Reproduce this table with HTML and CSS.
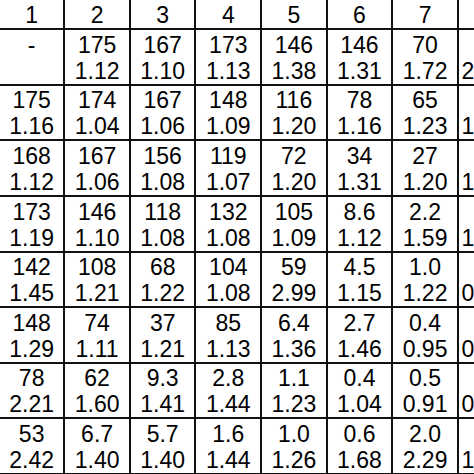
FILE: index.html
```html
<!DOCTYPE html>
<html lang="en">
<head>
<meta charset="utf-8">
<title>Table</title>
<link rel="stylesheet" href="styles.css">
</head>
<body>
<div class="viewport">
<table class="grid">
<colgroup>
<col class="c1"><col class="cn"><col class="cn"><col class="cn"><col class="cn"><col class="cn"><col class="cn"><col class="c8">
</colgroup>
<thead>
<tr class="head"><th>1</th><th>2</th><th>3</th><th>4</th><th>5</th><th>6</th><th>7</th><th>8</th></tr>
</thead>
<tbody>
<tr><td>-</td><td>175<br>1.12</td><td>167<br>1.10</td><td>173<br>1.13</td><td>146<br>1.38</td><td>146<br>1.31</td><td>70<br>1.72</td><td>9<br>2.06</td></tr>
<tr><td>175<br>1.16</td><td>174<br>1.04</td><td>167<br>1.06</td><td>148<br>1.09</td><td>116<br>1.20</td><td>78<br>1.16</td><td>65<br>1.23</td><td>7<br>1.18</td></tr>
<tr><td>168<br>1.12</td><td>167<br>1.06</td><td>156<br>1.08</td><td>119<br>1.07</td><td>72<br>1.20</td><td>34<br>1.31</td><td>27<br>1.20</td><td>5<br>1.14</td></tr>
<tr><td>173<br>1.19</td><td>146<br>1.10</td><td>118<br>1.08</td><td>132<br>1.08</td><td>105<br>1.09</td><td>8.6<br>1.12</td><td>2.2<br>1.59</td><td>1<br>1.27</td></tr>
<tr><td>142<br>1.45</td><td>108<br>1.21</td><td>68<br>1.22</td><td>104<br>1.08</td><td>59<br>2.99</td><td>4.5<br>1.15</td><td>1.0<br>1.22</td><td>1<br>0.98</td></tr>
<tr><td>148<br>1.29</td><td>74<br>1.11</td><td>37<br>1.21</td><td>85<br>1.13</td><td>6.4<br>1.36</td><td>2.7<br>1.46</td><td>0.4<br>0.95</td><td>0<br>0.87</td></tr>
<tr><td>78<br>2.21</td><td>62<br>1.60</td><td>9.3<br>1.41</td><td>2.8<br>1.44</td><td>1.1<br>1.23</td><td>0.4<br>1.04</td><td>0.5<br>0.91</td><td>0<br>0.93</td></tr>
<tr><td>53<br>2.42</td><td>6.7<br>1.40</td><td>5.7<br>1.40</td><td>1.6<br>1.44</td><td>1.0<br>1.26</td><td>0.6<br>1.68</td><td>2.0<br>2.29</td><td>1<br>1.85</td></tr>
</tbody>
</table>
</div>
</body>
</html>
```
FILE: styles.css
```css
html, body {
  margin: 0;
  padding: 0;
  background: #ffffff;
}
.viewport {
  width: 474px;
  height: 474px;
  overflow: hidden;
}
.grid {
  margin: -2px 0 0 -2px;
  border-collapse: separate;
  border-spacing: 2px;
  background: #111111;
  table-layout: fixed;
  width: 512.9px;
  font-family: "Liberation Sans", Arial, sans-serif;
  font-size: 23px;
  color: #000000;
}
.c1 { width: 63.3px; }
.cn { width: 63.6px; }
.c8 { width: 50px; }
.grid th,
.grid td {
  background: #ffffff;
  padding: 0;
  text-align: center;
  vertical-align: top;
  font-weight: normal;
  white-space: nowrap;
  box-sizing: border-box;
}
.head th {
  height: 28.3px;
  padding-top: 2px;
  line-height: 26px;
}
.grid td {
  height: 53.6px;
  padding-top: 1.6px;
  line-height: 26px;
}
```
